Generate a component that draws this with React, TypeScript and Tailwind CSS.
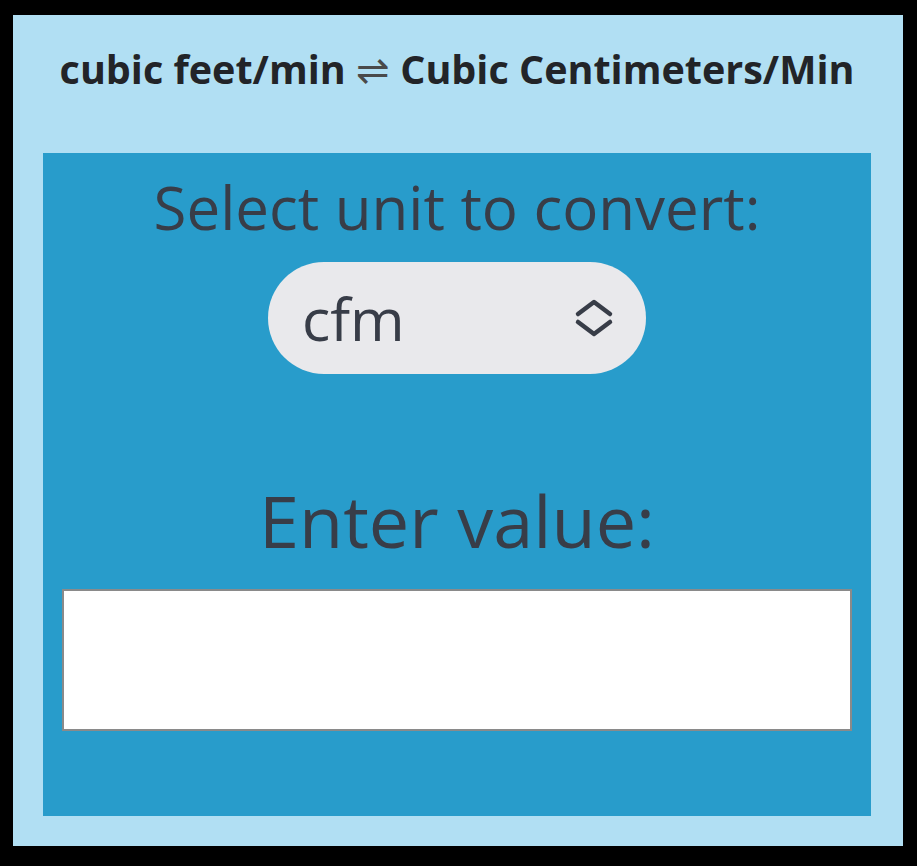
export default function App()
{
    return (
        <div className="w-[917px] h-[866px] bg-black pt-[15px] pl-[13px] pr-[14px] pb-[20px]" style={{ fontFamily: "'Open Sans', sans-serif" }}>
            <div className="h-full bg-[#b1dff3] flex flex-col pl-[30px] pr-[32px] pb-[30px]">
                <div className="h-[138px] flex items-start justify-center pt-[28px]">
                    <h1 className="text-[39.5px] leading-[53px] font-bold text-[#222428] whitespace-nowrap">
                        cubic feet/min <span className="font-light text-[#4a4a4a]">⇌</span> Cubic Centimeters/Min
                    </h1>
                </div>
                <div className="flex-1 bg-[#289ccb] flex flex-col items-center px-[19px]">
                    <div className="mt-[13px] text-[60px] leading-[82px] text-[#383d48]">Select unit to convert:</div>
                    <div className="mt-[14px] w-[378px] h-[112px] rounded-full bg-[#e9e9ec] flex items-center justify-between pl-[34px] pr-[32px]">
                        <span className="text-[59px] leading-[80px] text-[#383d48]">cfm</span>
                        <svg width="40" height="40" viewBox="0 0 40 40" fill="none" stroke="#383d48" strokeWidth="4.5" strokeLinecap="round" strokeLinejoin="round">
                            <path d="M4 16 L20 4 L36 16" />
                            <path d="M4 24 L20 36 L36 24" />
                        </svg>
                    </div>
                    <div className="mt-[97px] text-[72px] leading-[98px] text-[#383d48]">Enter value:</div>
                    <input className="mt-[20px] w-full h-[142px] bg-white border-2 border-[#8a8a8a] outline-none" />
                </div>
            </div>
        </div>
    );
}
